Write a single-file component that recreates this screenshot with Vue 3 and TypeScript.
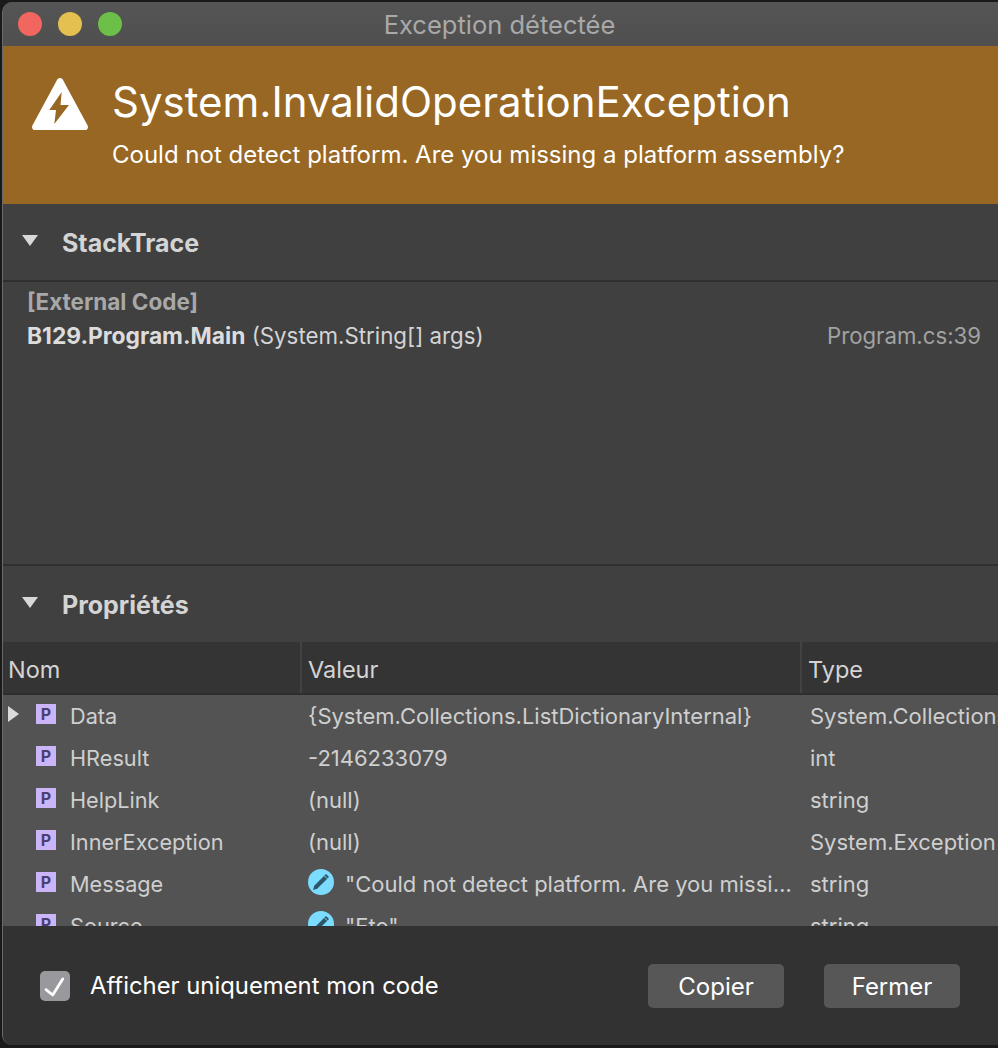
<script setup lang="ts">
interface Row {
  name: string;
  value: string;
  type: string;
  expandable?: boolean;
  editable?: boolean;
}

const rows: Row[] = [
  { name: "Data", value: "{System.Collections.ListDictionaryInternal}", type: "System.Collections.IDictionary", expandable: true },
  { name: "HResult", value: "-2146233079", type: "int" },
  { name: "HelpLink", value: "(null)", type: "string" },
  { name: "InnerException", value: "(null)", type: "System.Exception" },
  { name: "Message", value: "\"Could not detect platform. Are you missing a platform assembly?\"", type: "string", editable: true },
  { name: "Source", value: "\"Eto\"", type: "string", editable: true },
];
</script>

<template>
  <div class="screen">
    <div class="window">
      <header class="titlebar">
        <div class="lights">
          <span class="light red"></span>
          <span class="light yellow"></span>
          <span class="light green"></span>
        </div>
        <span class="title">Exception détectée</span>
      </header>

      <section class="banner">
        <svg class="warn" viewBox="0 0 58 54" width="58" height="54">
          <path d="M29 1c1.300 0 2.300.7 3 1.900l24.600 45.500c1 1.900-.2 4.600-2.400 4.600H3.800c-2.200 0-3.400-2.700-2.400-4.600L26 2.900C26.700 1.700 27.700 1 29 1z" fill="#fff" />
          <path d="M30.700 15 18.300 33H25L23.300 47 38 28H29.500z" fill="#976723" />
        </svg>
        <div class="banner-text">
          <h1>System.InvalidOperationException</h1>
          <p>Could not detect platform. Are you missing a platform assembly?</p>
        </div>
      </section>

      <section class="section-head stack-head">
        <span class="caret-down"></span>
        <span class="section-title">StackTrace</span>
      </section>

      <section class="stack">
        <div class="external">[External Code]</div>
        <div class="frame">
          <span><b>B129.Program.Main</b> (System.String[] args)</span>
          <span class="loc">Program.cs:39</span>
        </div>
      </section>

      <section class="section-head props-head">
        <span class="caret-down"></span>
        <span class="section-title">Propriétés</span>
      </section>

      <div class="table-head">
        <div class="col-name">Nom</div>
        <div class="col-value">Valeur</div>
        <div class="col-type">Type</div>
      </div>

      <div class="rows">
        <div v-for="row in rows" :key="row.name" class="row">
          <div class="cell-name">
            <span class="expander"><span v-if="row.expandable" class="caret-right"></span></span>
            <span class="badge">P</span>
            <span class="name-text">{{ row.name }}</span>
          </div>
          <div class="cell-value">
            <svg v-if="row.editable" class="pencil" viewBox="0 0 26 26" width="26" height="26">
              <circle cx="13" cy="13" r="13" fill="#7bdcff" />
              <path d="M18 5 21 8 9.200 19.800 5 21 6.200 16.800z" fill="#2f5568" />
              <path d="M16.300 6.700 19.300 9.700" stroke="#7bdcff" stroke-width="1" fill="none" />
            </svg>
            <span class="value-text">{{ row.value }}</span>
          </div>
          <div class="cell-type">{{ row.type }}</div>
        </div>
      </div>

      <footer class="footer">
        <label class="check">
          <span class="box">
            <svg viewBox="0 0 30 30" width="30" height="30">
              <path d="M6 18.700 12.700 24 22.700 8" stroke="#fff" stroke-width="2.800" stroke-linecap="round" stroke-linejoin="round" fill="none" />
            </svg>
          </span>
          <span>Afficher uniquement mon code</span>
        </label>
        <div class="buttons">
          <button class="btn">Copier</button>
          <button class="btn">Fermer</button>
        </div>
      </footer>
    </div>
  </div>
</template>

<style>
html, body { margin: 0; background: #1a1a1a; }
</style>

<style scoped>
.screen {
  width: 998px;
  height: 1048px;
  overflow: hidden;
  background: #1a1a1a;
  padding: 2px 0 3px 2px;
  box-sizing: border-box;
  font-family: Inter, "Liberation Sans", sans-serif;
}
.window {
  width: 1000px;
  height: 1043px;
  border-radius: 10px 0 0 10px;
  overflow: hidden;
  background: #404040;
  display: flex;
  flex-direction: column;
  border-left: 1px solid #6a6a6a;
  box-sizing: border-box;
}
.titlebar {
  height: 44px;
  flex: none;
  background: linear-gradient(#555, #4f4f4f);
  position: relative;
  display: flex;
  align-items: center;
  justify-content: center;
  padding-right: 6px;
}
.lights {
  position: absolute;
  left: 15px;
  top: 10px;
  display: flex;
  gap: 16px;
}
.light { width: 24px; height: 24px; border-radius: 50%; }
.red { background: #f1675f; }
.yellow { background: #e3c04f; }
.green { background: #6cc04a; }
.title { color: #a9a9a9; font-size: 25.500px; }
.banner {
  height: 158px;
  flex: none;
  background: #976723;
  display: flex;
  align-items: flex-start;
  box-sizing: border-box;
  padding: 30px 0 0 28px;
  color: #fff;
}
.warn { flex: none; margin-top: 1px; }
.banner-text { margin-left: 23px; }
h1 {
  margin: 0;
  font-size: 42px;
  font-weight: 400;
  line-height: 52px;
  white-space: nowrap;
}
.banner-text p {
  margin: 12px 0 0;
  font-size: 24px;
  line-height: 30px;
  white-space: nowrap;
}
.section-head {
  flex: none;
  display: flex;
  align-items: center;
  box-sizing: border-box;
  background: #404040;
  color: #d4d4d4;
}
.stack-head {
  height: 78px;
  padding: 0 0 0 19px;
  border-bottom: 2px solid #2f2f2f;
}
.props-head {
  height: 78px;
  padding: 0 0 0 19px;
  border-top: 2px solid #2f2f2f;
}
.caret-down {
  width: 0;
  height: 0;
  border-left: 8px solid transparent;
  border-right: 8px solid transparent;
  border-top: 11px solid #d8d8d8;
  margin-right: 24px;
  margin-top: -4px;
}
.section-title { font-size: 25px; font-weight: 700; margin-top: 1px; }
.stack {
  height: 282px;
  flex: none;
  box-sizing: border-box;
  padding: 6px 21px 0 24px;
  font-size: 22.300px;
  color: #d4d4d4;
}
.external { color: #a8a8a8; font-weight: 700; line-height: 28px; font-size: 22.500px; }
.frame {
  display: flex;
  justify-content: space-between;
  line-height: 28px;
  margin-top: 6px;
}
.frame b { font-weight: 700; color: #dcdcdc; font-size: 22.800px; }
.loc { color: #a2a2a2; font-size: 22.200px; }
.table-head {
  flex: none;
  height: 53px;
  box-sizing: border-box;
  display: flex;
  background: #343434;
  border-bottom: 2px solid #2e2e2e;
  color: #d4d4d4;
  font-size: 23.500px;
  line-height: 55px;
}
.col-name { width: 297px; padding-left: 5px; box-sizing: border-box; }
.col-value {
  width: 500px;
  padding-left: 6px;
  box-sizing: border-box;
  border-left: 2px solid #424242;
}
.col-type {
  flex: 1;
  padding-left: 6px;
  border-left: 2px solid #424242;
}
.rows {
  flex: 1;
  min-height: 0;
  overflow: hidden;
  background: #535353;
  color: #cfcfcf;
  font-size: 22px;
}
.row {
  height: 42px;
  display: flex;
  align-items: center;
}
.cell-name {
  width: 297px;
  flex: none;
  display: flex;
  align-items: center;
  box-sizing: border-box;
  padding-left: 5px;
}
.name-text { font-size: 21.700px; }
.expander { width: 28px; display: flex; align-items: center; }
.caret-right {
  width: 0;
  height: 0;
  margin-top: -4px;
  border-top: 8px solid transparent;
  border-bottom: 8px solid transparent;
  border-left: 11px solid #dadada;
}
.badge {
  width: 20px;
  height: 20px;
  flex: none;
  margin-right: 14px;
  margin-top: -4px;
  background: #c9b5f7;
  color: #4b3f73;
  font-size: 16px;
  font-weight: 700;
  line-height: 20px;
  text-align: center;
}
.cell-value {
  width: 500px;
  flex: none;
  box-sizing: border-box;
  padding: 0 7px 0 8px;
  display: flex;
  align-items: center;
  gap: 11px;
}
.pencil { flex: none; margin-top: -4px; }
.value-text {
  min-width: 0;
  overflow: hidden;
  white-space: nowrap;
  text-overflow: ellipsis;
}
.cell-type { white-space: nowrap; padding-left: 10px; }
.footer {
  flex: none;
  height: 119px;
  background: #323232;
  display: flex;
  align-items: center;
  justify-content: space-between;
  box-sizing: border-box;
  padding: 0 41px 0 37px;
}
.check {
  display: flex;
  align-items: center;
  color: #fff;
  font-size: 23.850px;
  gap: 20px;
}
.box {
  width: 30px;
  height: 30px;
  border-radius: 5px;
  background: #98989d;
  display: block;
}
.box svg { display: block; }
.buttons { display: flex; gap: 40px; padding-right: 1px; }
.btn {
  width: 136px;
  height: 44px;
  border: none;
  border-radius: 5px;
  background: #575757;
  color: #fff;
  font-family: inherit;
  font-size: 24px;
  padding: 2px 0 0;
}
</style>
